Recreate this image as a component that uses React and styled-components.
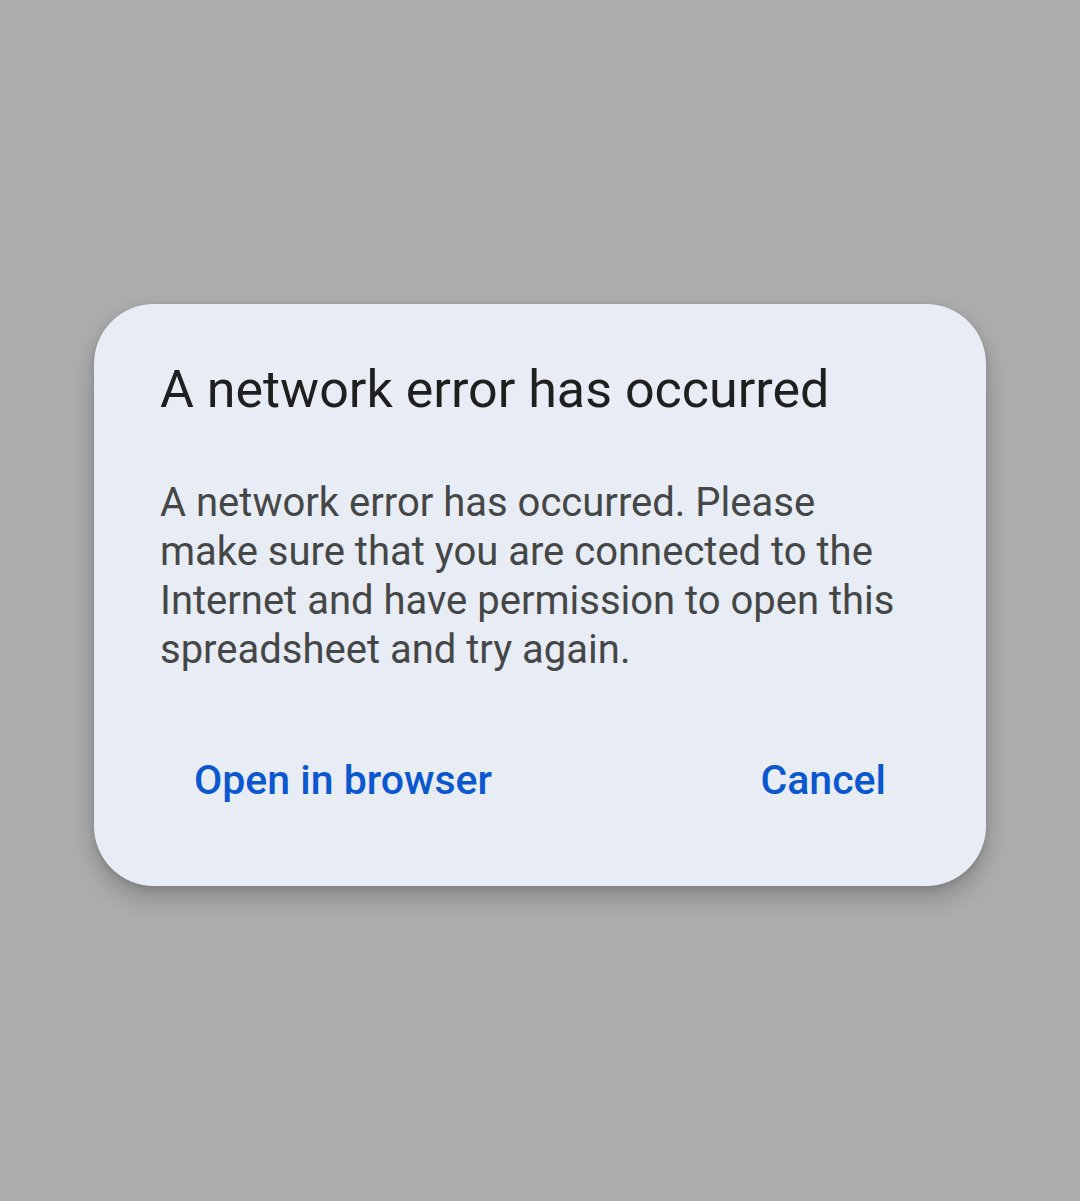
import React from 'react';
import styled, { createGlobalStyle } from 'styled-components';

const Global = createGlobalStyle`
  html, body {
    margin: 0;
    padding: 0;
    background: #adadad;
  }
  body {
    font-family: Roboto, "Open Sans", sans-serif;
  }
`;

const Backdrop = styled.div`
  min-height: 1201px;
  display: flex;
  align-items: center;
  justify-content: center;
  padding-bottom: 11px;
  box-sizing: border-box;
`;

const Dialog = styled.div`
  width: 892px;
  height: 582px;
  box-sizing: border-box;
  padding: 54px 66px 0 66px;
  background: #e8ecf5;
  border-radius: 60px;
  box-shadow: 0 12px 24px rgba(0, 0, 0, 0.22), 0 2px 6px rgba(0, 0, 0, 0.12);
  display: flex;
  flex-direction: column;
`;

const Title = styled.h1`
  margin: 0;
  font-size: 52px;
  line-height: 64px;
  font-weight: 400;
  color: #1f1f1f;
`;

const Body = styled.p`
  margin: 56px 0 0 0;
  font-size: 40px;
  line-height: 49px;
  font-weight: 400;
  color: #444746;
`;

const Actions = styled.div`
  display: flex;
  justify-content: space-between;
  margin-top: 74px;
`;

const TextButton = styled.button`
  border: none;
  background: transparent;
  padding: 8px 34px;
  font-family: inherit;
  font-size: 41px;
  font-weight: 500;
  line-height: 48px;
  color: #0b57d0;
  cursor: pointer;
`;

export default function App() {
  return (
    <>
      <Global />
      <Backdrop>
        <Dialog>
          <Title>A network error has occurred</Title>
          <Body>
            A network error has occurred. Please make sure that you are connected to the
            Internet and have permission to open this spreadsheet and try again.
          </Body>
          <Actions>
            <TextButton>Open in browser</TextButton>
            <TextButton>Cancel</TextButton>
          </Actions>
        </Dialog>
      </Backdrop>
    </>
  );
}
